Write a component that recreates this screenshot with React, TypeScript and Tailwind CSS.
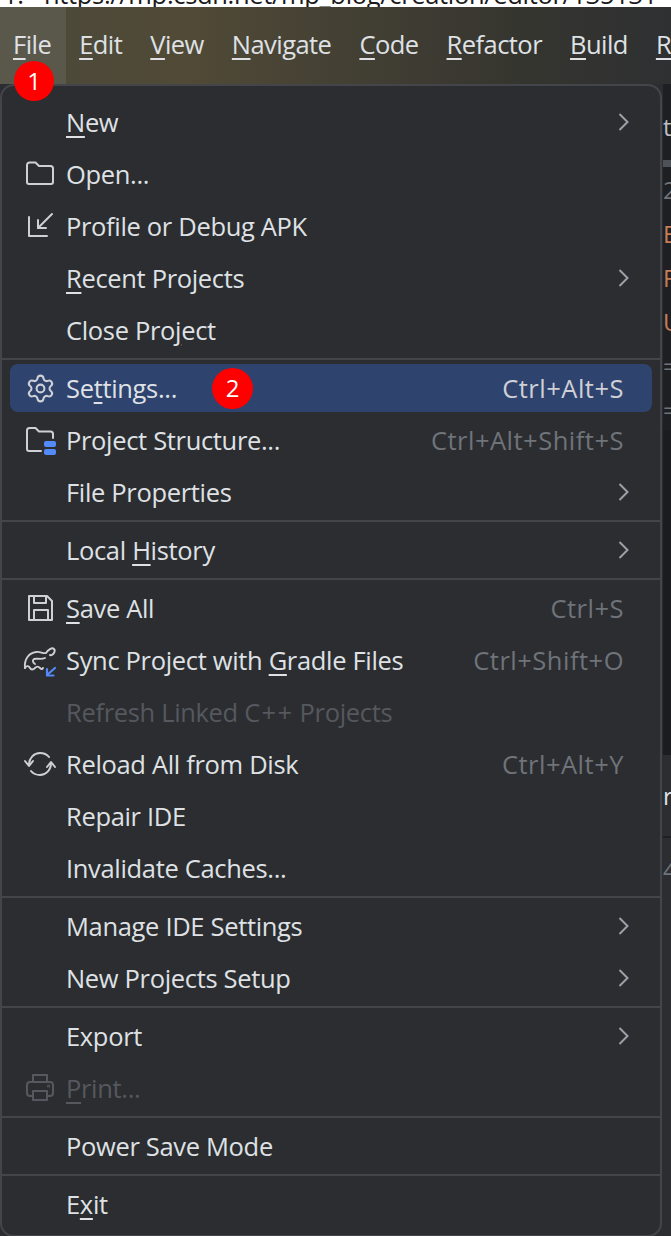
import React from "react";
import { Settings } from "lucide-react";

const C = ({ children }: { children: React.ReactNode }) => (
  <span className="underline decoration-[2px] underline-offset-[4px]">{children}</span>
);

const Icon = ({ children }: { children: React.ReactNode }) => (
  <svg width="32" height="32" viewBox="0 0 32 32" fill="none" stroke="currentColor" strokeWidth="2" strokeLinecap="round" strokeLinejoin="round">
    {children}
  </svg>
);

const Folder = () => (
  <Icon>
    <path d="M3 7a2.500 2.500 0 0 1 2.500-2.500h6l3.500 3.500H26.500A2.500 2.500 0 0 1 29 10.500V24a2 2 0 0 1-2 2H5a2 2 0 0 1-2-2z" />
  </Icon>
);
const ProfileIcon = () => (
  <Icon>
    <path d="M5 7v19h18" />
    <path d="M28 4 14 18" />
    <path d="M14 10v8h8" />
  </Icon>
);
const ProjectStructure = () => (
  <svg width="32" height="32" viewBox="0 0 32 32" fill="none" stroke="currentColor" strokeWidth="2" strokeLinecap="round" strokeLinejoin="round">
    <path d="M17 27H5a2 2 0 0 1-2-2V6.500A2.500 2.500 0 0 1 5.500 4h6l3.500 3.500H26.500A2.500 2.500 0 0 1 29 10v4" />
    <rect x="20" y="17" width="12" height="6" rx="2" fill="#548af7" stroke="none" />
    <rect x="20" y="25" width="12" height="6" rx="2" fill="#548af7" stroke="none" />
  </svg>
);
const Save = () => (
  <Icon>
    <path d="M5 4h18l5 5v19H5z" />
    <path d="M10 4v7h12V4" />
    <path d="M10 28V18h14v10" />
  </Icon>
);
const Gradle = () => (
  <svg width="32" height="32" viewBox="0 0 32 32" fill="none" stroke="currentColor" strokeWidth="1.900" strokeLinecap="round" strokeLinejoin="round" className="overflow-visible">
    <path d="M1 24C0 15 5 9 12 8c4-1 7 2 10 1 2-3 6-6 8-4 2 2-1 7-4 6" />
    <path d="M21 14c-4 2-8 0-11 1-2 1-1 4 1 5" />
    <path d="M1 24c2-3 4-2 5 0s3 2 5 0 3-2 5 0 2 1 3 0" />
    <path d="M31 24 23 31" stroke="#548af7" strokeWidth="2.200" />
    <path d="M23 25v6.500h6.500" stroke="#548af7" strokeWidth="2.200" />
  </svg>
);
const Reload = () => (
  <Icon>
    <path d="M5 17C5 10 10 5 16 5c4 0 7 1.500 9 4" />
    <path d="M1 13l4 5 4-5" />
    <path d="M27 15c0 7-5 12-11 12-4 0-7-1.500-9-4" />
    <path d="M23 19l4-5 4 5" />
  </Icon>
);
const Printer = () => (
  <Icon>
    <path d="M9 10V3h14v7" />
    <path d="M9 24H6a3 3 0 0 1-3-3v-8a3 3 0 0 1 3-3h20a3 3 0 0 1 3 3v8a3 3 0 0 1-3 3h-3" />
    <path d="M9 19h14v9H9z" />
    <circle cx="24.500" cy="14" r="0.500" />
  </Icon>
);

const Chevron = () => (
  <svg width="11" height="18" viewBox="0 0 11 18" fill="none" stroke="#9da0a8" strokeWidth="2" className="mr-[-5px]">
    <path d="M1.500 1 9.500 9 1.500 17" />
  </svg>
);

type RowProps = {
  label: React.ReactNode;
  icon?: React.ReactNode;
  shortcut?: string;
  arrow?: boolean;
  disabled?: boolean;
  active?: boolean;
  badge?: React.ReactNode;
};

const Row = ({ label, icon, shortcut, arrow, disabled, active, badge }: RowProps) => (
  <div className="flex h-[52px] items-start px-[8px] pt-[1px]">
    <div
      className={`flex h-[48px] w-full items-center rounded-[8px] pr-[28px] pl-[14px] ${active ? "bg-[#2e436e]" : ""} ${
        disabled ? "text-[#55585e]" : "text-[#dfe1e5]"
      }`}
    >
      <span className={`flex w-[32px] shrink-0 items-center justify-center ${disabled ? "text-[#55585e]" : "text-[#ced0d6]"}`}>{icon}</span>
      <span className="ml-[10px] whitespace-nowrap">{label}</span>
      {badge}
      <span className="flex-1" />
      {shortcut && (
        <span className={`tracking-[0.500px] ${active ? "text-[#ced0d6]" : "text-[#6f737a]"}`}>{shortcut}</span>
      )}
      {arrow && <Chevron />}
    </div>
  </div>
);

const Sep = () => (
  <div className="flex h-[6px] items-start pt-[1px]">
    <div className="h-[2px] w-full bg-[#43454a]" />
  </div>
);

const Marker = ({ n, className }: { n: number; className: string }) => (
  <span className={`flex items-center justify-center rounded-full bg-[#fe0000] text-[24px] text-white ${className}`}>{n}</span>
);

const menus: { label: React.ReactNode; cls: string }[] = [
  { label: <><C>F</C>ile</>, cls: "bg-[#5a574b] pr-[15px] pl-[13px]" },
  { label: <><C>E</C>dit</>, cls: "pr-[14px] pl-[13px]" },
  { label: <><C>V</C>iew</>, cls: "px-[14px]" },
  { label: <><C>N</C>avigate</>, cls: "px-[14px]" },
  { label: <><C>C</C>ode</>, cls: "px-[14px]" },
  { label: <><C>R</C>efactor</>, cls: "px-[14px]" },
  { label: <><C>B</C>uild</>, cls: "px-[14px]" },
  { label: <><C>R</C>un</>, cls: "px-[14px]" },
];

export default function App() {
  return (
    <div className="relative h-[1236px] w-[671px] overflow-hidden bg-[#2b2d30] font-['Open_Sans','Noto_Sans',sans-serif] text-[25.500px] tracking-[-0.330px] text-[#dfe1e5]">
      <div className="flex h-[7px] items-end overflow-hidden bg-white pl-[3px] whitespace-nowrap text-[#1a1a1a]">
        <span className="mb-[-2px] w-[41px] shrink-0 leading-[30px]">1.</span>
        <span className="mb-[-2px] shrink-0 leading-[30px]">https://mp.csdn.net/mp_blog/creation/editor/135131</span>
      </div>
      <div className="flex h-[77px] items-center overflow-hidden bg-[linear-gradient(90deg,#4c493b_0%,#504a36_28%,#403d33_58%,#35352f_78%,#2e3032_100%)] tracking-[-0.550px] whitespace-nowrap">
        {menus.map((m, i) => (
          <div key={i} className={`flex h-full shrink-0 items-center pb-[2px] ${m.cls}`}>
            {m.label}
          </div>
        ))}
      </div>

      {/* Editor fragments behind the menu */}
      <div className="absolute top-[84px] left-[662px] flex h-[1152px] w-[9px] flex-col overflow-hidden pl-[1px] text-[24px] leading-[44px]">
        <div className="flex h-[346px] flex-col bg-[#1e1f22]">
          <span className="mt-[21px] text-[#bcbec4]">t</span>
          <div className="mt-[11px] h-[7px] shrink-0 bg-[#4e5157]" />
          <span className="mt-[1px] text-[#6f737a]">2</span>
          <span className="text-[#c77d55]">E</span>
          <span className="text-[#c77d55]">F</span>
          <span className="text-[#c77d55]">U</span>
          <span className="text-[#6f737a]">=</span>
          <span className="text-[#6f737a]">=</span>
        </div>
        <div className="h-[325px] bg-[#1b1c1f]" />
        <div className="flex h-[81px] flex-col justify-center">
          <span className="text-[#dfe1e5]">r</span>
        </div>
        <div className="h-[2px] bg-[#1e1f22]" />
        <span className="mt-[10px] text-[#6f737a]">4</span>
      </div>

      {/* File menu */}
      <div className="absolute top-[84px] left-0 h-[1153px] w-[662px] rounded-[14px] border-2 border-[#43454a] bg-[#2b2d30] pt-[11px]">
        <Row label={<><C>N</C>ew</>} arrow />
        <Row label="Open..." icon={<Folder />} />
        <Row label="Profile or Debug APK" icon={<ProfileIcon />} />
        <Row label={<><C>R</C>ecent Projects</>} arrow />
        <Row label={<>Close Pro<C>j</C>ect</>} />
        <Sep />
        <Row
          label={<>Se<C>t</C>tings...</>}
          icon={<Settings size={31} strokeWidth={1.600} />}
          shortcut="Ctrl+Alt+S"
          active
          badge={<Marker n={2} className="ml-[35px] h-[41px] w-[41px]" />}
        />
        <Row label="Project Structure..." icon={<ProjectStructure />} shortcut="Ctrl+Alt+Shift+S" />
        <Row label="File Properties" arrow />
        <Sep />
        <Row label={<>Local <C>H</C>istory</>} arrow />
        <Sep />
        <Row label={<><C>S</C>ave All</>} icon={<Save />} shortcut="Ctrl+S" />
        <Row label={<>Sync Project with <C>G</C>radle Files</>} icon={<Gradle />} shortcut="Ctrl+Shift+O" />
        <Row label={<>Refresh Linked <span className="tracking-[1.300px]">C++</span> Projects</>} disabled />
        <Row label="Reload All from Disk" icon={<Reload />} shortcut="Ctrl+Alt+Y" />
        <Row label="Repair IDE" />
        <Row label="Invalidate Caches..." />
        <Sep />
        <Row label="Manage IDE Settings" arrow />
        <Row label="New Projects Setup" arrow />
        <Sep />
        <Row label="Export" arrow />
        <Row label={<><C>P</C>rint...</>} icon={<Printer />} disabled />
        <Sep />
        <Row label="Power Save Mode" />
        <Sep />
        <Row label={<>E<C>x</C>it</>} />
      </div>

      <Marker n={1} className="absolute top-[61px] left-[14px] h-[40px] w-[40px]" />
    </div>
  );
}
